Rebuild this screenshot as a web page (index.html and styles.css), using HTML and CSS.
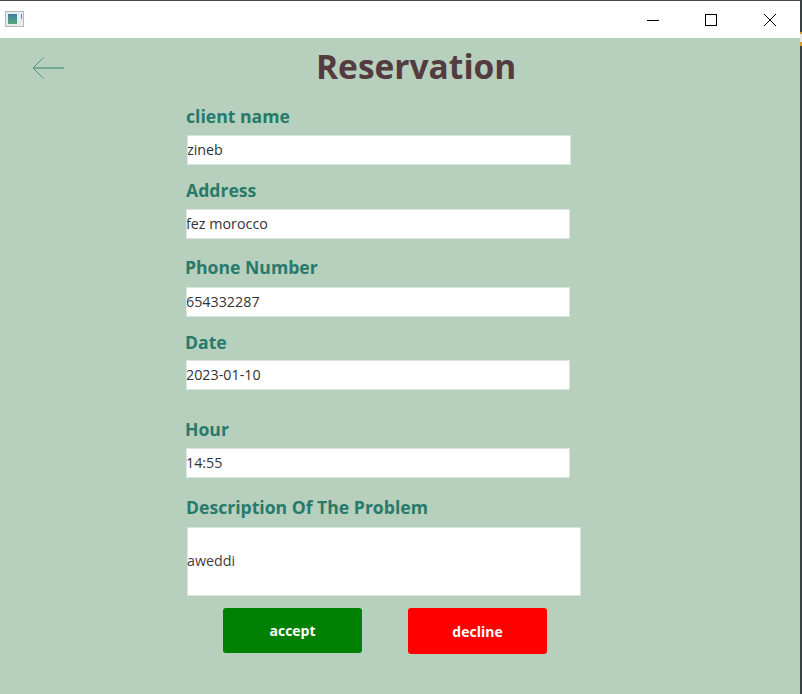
FILE: index.html
```html
<!DOCTYPE html>
<html lang="en">
<head>
    <meta charset="UTF-8">
    <meta name="viewport" content="width=device-width, initial-scale=1.0">
    <title>Reservation</title>
    <link rel="stylesheet" href="styles.css">
</head>
<body>
    <div class="window">
        <div class="titlebar">
            <svg class="app-icon" width="20" height="17" viewBox="0 0 20 17">
                <defs>
                    <linearGradient id="appIconFill" x1="0" y1="0" x2="0" y2="1">
                        <stop offset="0" stop-color="#3f7fa0"/>
                        <stop offset="1" stop-color="#55a878"/>
                    </linearGradient>
                </defs>
                <rect x="0.5" y="0.5" width="18" height="15" fill="#e8ecee" stroke="#b4b8bc"/>
                <rect x="3" y="3" width="9" height="10" fill="url(#appIconFill)"/>
                <rect x="16" y="3" width="1" height="5" fill="#4f9a8c"/>
            </svg>
            <div class="window-controls">
                <button class="window-btn" aria-label="Minimize">
                    <svg width="14" height="14" viewBox="0 0 14 14"><path d="M1 7.5h12" stroke="#000" fill="none"/></svg>
                </button>
                <button class="window-btn" aria-label="Maximize">
                    <svg width="14" height="14" viewBox="0 0 14 14"><rect x="1.5" y="1.5" width="11" height="11" stroke="#000" fill="none"/></svg>
                </button>
                <button class="window-btn" aria-label="Close">
                    <svg width="14" height="14" viewBox="0 0 14 14"><path d="M1 1l12 12M13 1L1 13" stroke="#000" fill="none"/></svg>
                </button>
            </div>
        </div>

        <div class="content">
            <div class="header">
                <svg class="back-arrow" width="32" height="24" viewBox="0 0 32 24">
                    <path d="M1 12h31" stroke="#5f9f8c" stroke-width="1.6" fill="none"/>
                    <path d="M11.5 1.5L1 12l10.5 10.5" stroke="#4f9482" stroke-width="1" fill="none"/>
                </svg>
                <h1>Reservation</h1>
            </div>

            <form class="form">
                <div class="field field-name">
                    <label>client name</label>
                    <input type="text" value="zineb">
                </div>
                <div class="field field-address">
                    <label>Address</label>
                    <input type="text" value="fez morocco">
                </div>
                <div class="field field-phone">
                    <label>Phone Number</label>
                    <input type="text" value="654332287">
                </div>
                <div class="field field-date">
                    <label>Date</label>
                    <input type="text" value="2023-01-10">
                </div>
                <div class="field field-hour">
                    <label>Hour</label>
                    <input type="text" value="14:55">
                </div>
                <div class="field field-description">
                    <label>Description Of The Problem</label>
                    <div class="description-box">aweddi</div>
                </div>
                <div class="actions">
                    <button type="button" class="action accept">accept</button>
                    <button type="button" class="action decline">decline</button>
                </div>
            </form>
        </div>
    </div>
</body>
</html>
```

FILE: styles.css
```css
* {
    box-sizing: border-box;
}
html, body {
    margin: 0;
    padding: 0;
    height: 100%;
}
body {
    font-family: "Open Sans", "Noto Sans", Arial, sans-serif;
    background: linear-gradient(to bottom, #3c4242 32px, #d89a2c 32px, #d89a2c 34px, #e6e6e6 34px, #e6e6e6 42px, #d89a2c 42px, #d89a2c 46px, #3c4242 46px);
    overflow: hidden;
}
.window {
    display: flex;
    flex-direction: column;
    height: 694px;
    width: 800px;
    background-color: #b7cfbd;
}
.titlebar {
    display: flex;
    align-items: center;
    justify-content: space-between;
    height: 38px;
    background: white;
    border-top: 1px solid #454c4a;
    padding-left: 5px;
    flex-shrink: 0;
}
.app-icon {
    margin-top: -1px;
}
.window-controls {
    display: flex;
    padding-right: 1px;
}
.window-btn {
    width: 58.5px;
    height: 30px;
    border: none;
    background: none;
    padding: 0;
    display: flex;
    align-items: center;
    justify-content: center;
}
.content {
    flex: 1;
}
.header {
    display: flex;
    align-items: center;
    height: 56px;
    padding-left: 32px;
}
.back-arrow {
    flex-shrink: 0;
    margin-top: 3px;
}
h1 {
    margin: 0 0 0 252px;
    font-size: 33.5px;
    font-weight: 700;
    line-height: 48px;
    color: #543b3f;
}
.form {
    padding-top: 10px;
}
label {
    display: block;
    height: 24px;
    line-height: 24px;
    font-size: 17.6px;
    font-weight: 700;
    color: #287a6a;
    margin-bottom: 7px;
}
input {
    display: block;
    width: 384px;
    height: 30px;
    padding: 0 0 2px;
    text-indent: -1px;
    border: 1px solid #d9e6dd;
    background: white;
    font-family: inherit;
    font-size: 14.3px;
    color: #333;
}
.field-name {
    margin-left: 186px;
}
.field-name input {
    margin-left: 1px;
}
.field-address {
    margin-left: 186px;
    margin-top: 13px;
}
.field-phone {
    margin-left: 185px;
    margin-top: 16px;
}
.field-phone label {
    margin-bottom: 8px;
}
.field-phone input,
.field-date input,
.field-hour input {
    margin-left: 1px;
}
.field-date {
    margin-left: 185px;
    margin-top: 13px;
}
.field-date label {
    margin-bottom: 6px;
}
.field-hour {
    margin-left: 185px;
    margin-top: 27px;
}
.field-description {
    margin-left: 186px;
    margin-top: 17px;
}
.field-description label {
    margin-bottom: 8px;
}
.description-box {
    display: flex;
    align-items: center;
    width: 394px;
    height: 69px;
    margin-left: 1px;
    padding-bottom: 2px;
    text-indent: -1px;
    border: 1px solid #d9e6dd;
    background: white;
    font-size: 14.3px;
    color: #4b3a3c;
}
.actions {
    display: flex;
    gap: 46.7px;
    margin-top: 12px;
    margin-left: 223.4px;
}
.action {
    width: 138.3px;
    height: 45px;
    border: none;
    border-radius: 3px;
    color: white;
    font-family: inherit;
    font-size: 14px;
    font-weight: 700;
}
.accept {
    background-color: #008000;
}
.decline {
    background-color: #ff0000;
    height: 46px;
}
```
